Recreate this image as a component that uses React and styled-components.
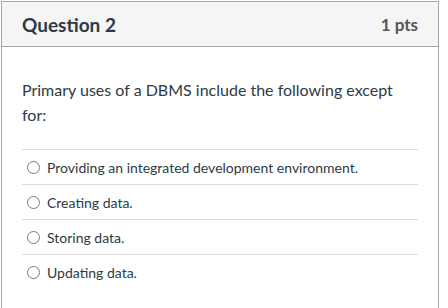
import React from "react";
import styled, { createGlobalStyle } from "styled-components";

const Global = createGlobalStyle`
  html, body { margin: 0; padding: 0; background: #ffffff; }
  body { font-family: Lato, "Open Sans", sans-serif; color: #2d3b45; }
`;

const Card = styled.section`
  margin: 1px 0 0 1px;
  width: 438px;
  box-sizing: border-box;
  border: 1px solid #a9a9a9;
  border-bottom: none;
  height: 320px;
`;

const Header = styled.header`
  display: flex;
  align-items: center;
  justify-content: space-between;
  height: 44px;
  padding: 0 20px;
  background: #f5f5f5;
  border-bottom: 1px solid #a9a9a9;
`;

const Title = styled.h2`
  margin: 0;
  font-size: 19px;
  font-weight: 700;
  color: #2d3b45;
`;

const Points = styled.span`
  font-size: 17px;
  font-weight: 700;
  color: #555555;
`;

const Body = styled.div`
  padding: 30px 20px 0;
`;

const Prompt = styled.p`
  margin: 0 0 22px;
  font-size: 16px;
  line-height: 25px;
  color: #2d3b45;
`;

const Answers = styled.ul`
  list-style: none;
  margin: 0;
  padding: 0;
`;

const Answer = styled.li`
  display: flex;
  align-items: center;
  height: 34px;
  border-top: 1px solid #dcdcdc;
  font-size: 14px;
  color: #2d3b45;
`;

const Radio = styled.span`
  width: 13px;
  height: 13px;
  box-sizing: border-box;
  border-radius: 50%;
  border: 1px solid #7a7a7a;
  margin: 0 7px 0 5px;
  flex-shrink: 0;
`;

const options = [
  "Providing an integrated development environment.",
  "Creating data.",
  "Storing data.",
  "Updating data.",
];

export default function App() {
  return (
    <>
      <Global />
      <Card>
        <Header>
          <Title>Question 2</Title>
          <Points>1 pts</Points>
        </Header>
        <Body>
          <Prompt>Primary uses of a DBMS include the following except for:</Prompt>
          <Answers>
            {options.map((o) => (
              <Answer key={o}>
                <Radio />
                {o}
              </Answer>
            ))}
          </Answers>
        </Body>
      </Card>
    </>
  );
}
